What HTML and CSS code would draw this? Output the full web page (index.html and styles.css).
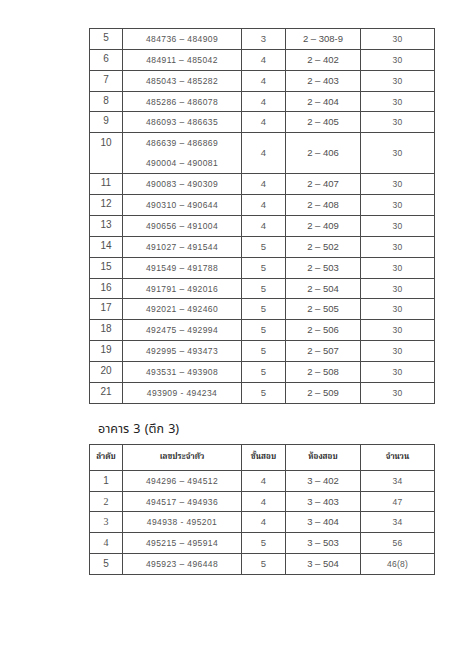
FILE: index.html
```html
<!DOCTYPE html>
<html lang="th">
<head>
<meta charset="utf-8">
<title>ตารางห้องสอบ</title>
<link rel="stylesheet" href="styles.css">
</head>
<body>
<div class="page">
  <table class="grid first">
    <colgroup>
      <col class="c1"><col class="c2"><col class="c3"><col class="c4"><col class="c5">
    </colgroup>
    <tbody>
      <tr><td class="no">5</td><td class="ids">484736 – 484909</td><td class="fl">3</td><td class="rm">2 – 308-9</td><td class="ct">30</td></tr>
      <tr><td class="no">6</td><td class="ids">484911 – 485042</td><td class="fl">4</td><td class="rm">2 – 402</td><td class="ct">30</td></tr>
      <tr><td class="no">7</td><td class="ids">485043 – 485282</td><td class="fl">4</td><td class="rm">2 – 403</td><td class="ct">30</td></tr>
      <tr><td class="no">8</td><td class="ids">485286 – 486078</td><td class="fl">4</td><td class="rm">2 – 404</td><td class="ct">30</td></tr>
      <tr><td class="no">9</td><td class="ids">486093 – 486635</td><td class="fl">4</td><td class="rm">2 – 405</td><td class="ct">30</td></tr>
      <tr class="double"><td class="no top">10</td><td class="ids top">486639 – 486869<br>490004 – 490081</td><td class="fl">4</td><td class="rm">2 – 406</td><td class="ct">30</td></tr>
      <tr><td class="no">11</td><td class="ids">490083 – 490309</td><td class="fl">4</td><td class="rm">2 – 407</td><td class="ct">30</td></tr>
      <tr><td class="no">12</td><td class="ids">490310 – 490644</td><td class="fl">4</td><td class="rm">2 – 408</td><td class="ct">30</td></tr>
      <tr><td class="no">13</td><td class="ids">490656 – 491004</td><td class="fl">4</td><td class="rm">2 – 409</td><td class="ct">30</td></tr>
      <tr><td class="no">14</td><td class="ids">491027 – 491544</td><td class="fl">5</td><td class="rm">2 – 502</td><td class="ct">30</td></tr>
      <tr><td class="no">15</td><td class="ids">491549 – 491788</td><td class="fl">5</td><td class="rm">2 – 503</td><td class="ct">30</td></tr>
      <tr><td class="no">16</td><td class="ids">491791 – 492016</td><td class="fl">5</td><td class="rm">2 – 504</td><td class="ct">30</td></tr>
      <tr><td class="no">17</td><td class="ids">492021 – 492460</td><td class="fl">5</td><td class="rm">2 – 505</td><td class="ct">30</td></tr>
      <tr><td class="no">18</td><td class="ids">492475 – 492994</td><td class="fl">5</td><td class="rm">2 – 506</td><td class="ct">30</td></tr>
      <tr><td class="no">19</td><td class="ids">492995 – 493473</td><td class="fl">5</td><td class="rm">2 – 507</td><td class="ct">30</td></tr>
      <tr><td class="no">20</td><td class="ids">493531 – 493908</td><td class="fl">5</td><td class="rm">2 – 508</td><td class="ct">30</td></tr>
      <tr><td class="no">21</td><td class="ids">493909 - 494234</td><td class="fl">5</td><td class="rm">2 – 509</td><td class="ct">30</td></tr>
    </tbody>
  </table>

  <h2 class="building">อาคาร 3 (ตึก 3)</h2>

  <table class="grid second">
    <colgroup>
      <col class="c1"><col class="c2"><col class="c3"><col class="c4"><col class="c5">
    </colgroup>
    <thead>
      <tr><th>ลำดับ</th><th>เลขประจำตัว</th><th>ชั้นสอบ</th><th>ห้องสอบ</th><th>จำนวน</th></tr>
    </thead>
    <tbody>
      <tr><td class="no">1</td><td class="ids">494296 – 494512</td><td class="fl">4</td><td class="rm">3 – 402</td><td class="ct">34</td></tr>
      <tr><td class="no serif">2</td><td class="ids">494517 – 494936</td><td class="fl">4</td><td class="rm">3 – 403</td><td class="ct">47</td></tr>
      <tr><td class="no serif">3</td><td class="ids">494938 - 495201</td><td class="fl">4</td><td class="rm">3 – 404</td><td class="ct">34</td></tr>
      <tr><td class="no serif">4</td><td class="ids">495215 – 495914</td><td class="fl">5</td><td class="rm">3 – 503</td><td class="ct">56</td></tr>
      <tr><td class="no">5</td><td class="ids">495923 – 496448</td><td class="fl">5</td><td class="rm">3 – 504</td><td class="ct">46(8)</td></tr>
    </tbody>
  </table>
</div>
</body>
</html>
```

FILE: styles.css
```css
html, body {
  margin: 0;
  padding: 0;
  background: #ffffff;
}

body {
  font-family: "Liberation Sans", Arial, "Noto Sans Thai", Loma, Garuda, sans-serif;
  color: #555555;
}

.page {
  padding: 28px 0 0 89px;
}

.grid {
  border-collapse: collapse;
  table-layout: fixed;
  width: 345px;
  border: 1px solid #4a4a4a;
}

.grid .c1 { width: 33px; }
.grid .c2 { width: 119px; }
.grid .c3 { width: 44px; }
.grid .c4 { width: 75px; }
.grid .c5 { width: 74px; }

.grid td,
.grid th {
  border: 1px solid #4a4a4a;
  padding: 0;
  text-align: center;
  vertical-align: middle;
  line-height: 14px;
}

.grid td {
  height: 19.87px;
}

.first td.no {
  height: 17.87px;
  padding-bottom: 2px;
}

.no {
  font-size: 10px;
  color: #505050;
}

.no.serif {
  font-family: "Liberation Serif", "Times New Roman", serif;
  font-size: 10px;
}

.ids {
  font-size: 8.5px;
  letter-spacing: 0.4px;
  color: #555555;
}

.fl {
  font-size: 9.5px;
  color: #5a5a5a;
}

.rm {
  font-size: 9.5px;
  color: #4e4e4e;
}

.ct {
  font-size: 8.5px;
  letter-spacing: 0.2px;
  color: #5a5a5a;
}

.first .double td {
  height: 39.4px;
}

.first .double td.top {
  vertical-align: top;
  line-height: 20px;
  padding: 0;
  height: 39.4px;
}

.building {
  margin: 16px 0 4px 9px;
  font-size: 12.5px;
  line-height: 20px;
  font-weight: normal;
  letter-spacing: 0;
  word-spacing: 1px;
  color: #222222;
  font-family: "Noto Sans Thai", Loma, Garuda, "Liberation Sans", sans-serif;
}

.grid th {
  height: 25px;
  font-size: 8px;
  font-weight: bold;
  color: #2a2a2a;
  font-family: "Noto Serif Thai", "Noto Sans Thai", Norasi, Garuda, "Liberation Serif", serif;
}
```
